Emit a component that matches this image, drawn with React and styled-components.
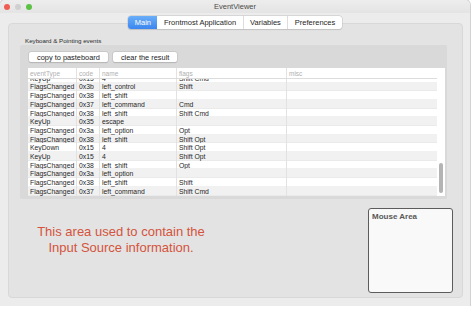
import React from "react";
import styled, { createGlobalStyle } from "styled-components";

const GlobalStyle = createGlobalStyle`
  html, body {
    margin: 0;
    padding: 0;
    background: #ffffff;
  }
  body {
    font-family: "Liberation Sans", Arial, sans-serif;
  }
`;

const rows = [
  ["KeyUp", "0x15", "4", "Shift Cmd"],
  ["FlagsChanged", "0x3b", "left_control", "Shift"],
  ["FlagsChanged", "0x38", "left_shift", ""],
  ["FlagsChanged", "0x37", "left_command", "Cmd"],
  ["FlagsChanged", "0x38", "left_shift", "Shift Cmd"],
  ["KeyUp", "0x35", "escape", ""],
  ["FlagsChanged", "0x3a", "left_option", "Opt"],
  ["FlagsChanged", "0x38", "left_shift", "Shift Opt"],
  ["KeyDown", "0x15", "4", "Shift Opt"],
  ["KeyUp", "0x15", "4", "Shift Opt"],
  ["FlagsChanged", "0x38", "left_shift", "Opt"],
  ["FlagsChanged", "0x3a", "left_option", ""],
  ["FlagsChanged", "0x38", "left_shift", "Shift"],
  ["FlagsChanged", "0x37", "left_command", "Shift Cmd"],
];

const tabs = ["Main", "Frontmost Application", "Variables", "Preferences"];

const App = () => {
  return (
    <>
      <GlobalStyle />
      <Window>
        <TitleBar>
          <Lights>
            <Light color="#ef5d53" />
            <Light color="#d0d0d0" />
            <Light color="#5cc245" />
          </Lights>
          <Title>EventViewer</Title>
          <span />
        </TitleBar>
        <Content>
          <Tabs>
            {tabs.map((t) => (
              <Tab key={t} active={t === "Main"}>
                {t}
              </Tab>
            ))}
          </Tabs>
          <Panel>
            <GroupLabel>Keyboard &amp; Pointing events</GroupLabel>
            <Group>
              <Buttons>
                <Button>copy to pasteboard</Button>
                <Button>clear the result</Button>
              </Buttons>
              <Table>
                <HeaderRow>
                  <Cell w={49}>eventType</Cell>
                  <Cell w={23}>code</Cell>
                  <Cell w={77}>name</Cell>
                  <Cell w={110}>flags</Cell>
                  <Cell grow>misc</Cell>
                </HeaderRow>
                <Body>
                  <RowList>
                    {rows.map((r, i) => (
                      <Row key={i}>
                        <Cell w={49}>{r[0]}</Cell>
                        <Cell w={23}>{r[1]}</Cell>
                        <Cell w={77}>{r[2]}</Cell>
                        <Cell w={110}>{r[3]}</Cell>
                        <Cell grow />
                      </Row>
                    ))}
                  </RowList>
                  <Scroller />
                </Body>
              </Table>
            </Group>
            <Bottom>
              <InfoText>
                This area used to contain the
                <br />
                Input Source information.
              </InfoText>
              <MouseArea>Mouse Area</MouseArea>
            </Bottom>
          </Panel>
        </Content>
      </Window>
    </>
  );
};

const Window = styled.div`
  width: 470px;
  height: 306px;
  background: #ececec;
  border-radius: 5px 5px 0 0;
  box-shadow: 0 0 0 1px #d2d2d2;
  display: flex;
  flex-direction: column;
  overflow: hidden;
`;

const TitleBar = styled.div`
  height: 13px;
  display: grid;
  grid-template-columns: 1fr auto 1fr;
  align-items: center;
  background: linear-gradient(#ededed, #e4e4e4);
`;

const Lights = styled.div`
  display: flex;
  gap: 5px;
  padding-left: 4px;
`;

const Light = styled.span`
  width: 6px;
  height: 6px;
  border-radius: 50%;
  background: ${(p) => p.color};
`;

const Title = styled.div`
  font-size: 7.5px;
  color: #4a4a4a;
`;

const Content = styled.div`
  flex: 1;
  display: flex;
  flex-direction: column;
  padding: 3px 7px 8px 8px;
`;

const Tabs = styled.div`
  align-self: center;
  display: flex;
  height: 13px;
  margin-left: -1px;
  margin-bottom: -6px;
  background: #ffffff;
  border-radius: 3px;
  box-shadow: 0 0 0 0.5px #c4c4c4, 0 0.5px 1px rgba(0, 0, 0, 0.15);
  position: relative;
  z-index: 1;
`;

const Tab = styled.div`
  display: flex;
  align-items: center;
  padding: 0 6.5px;
  font-size: 7.5px;
  color: ${(p) => (p.active ? "#ffffff" : "#262626")};
  background: ${(p) =>
    p.active ? "linear-gradient(#6aaef8, #3b86ef)" : "transparent"};
  border-radius: ${(p) => (p.active ? "3px 0 0 3px" : "0")};
  border-left: ${(p) => (p.active ? "none" : "1px solid #dddddd")};
  &:nth-child(2) {
    border-left: none;
  }
`;

const Panel = styled.div`
  flex: 1;
  display: flex;
  flex-direction: column;
  background: #e3e3e3;
  border: 1px solid #d8d8d8;
  border-radius: 4px;
  padding: 13px 9px 4px 11px;
`;

const GroupLabel = styled.div`
  font-size: 6.2px;
  line-height: 8px;
  color: #2a2a2a;
  margin-left: 5px;
`;

const Group = styled.div`
  margin-right: 6px;
  height: 154px;
  box-sizing: border-box;
  background: #d9d9d9;
  border-radius: 2px;
  padding: 7px 2px 3px 8px;
  display: flex;
  flex-direction: column;
`;

const Buttons = styled.div`
  display: flex;
  gap: 5px;
  padding-left: 1px;
  margin-bottom: 6px;
`;

const Button = styled.div`
  height: 10px;
  display: flex;
  align-items: center;
  padding: 0 8px;
  font-size: 7.4px;
  color: #222222;
  background: #ffffff;
  border-radius: 2px;
  box-shadow: 0 0 0 0.5px #bdbdbd, 0 0.5px 1px rgba(0, 0, 0, 0.2);
`;

const Table = styled.div`
  background: #ffffff;
  display: flex;
  flex-direction: column;
  flex: 1;
`;

const HeaderRow = styled.div`
  display: flex;
  height: 11px;
  align-items: center;
  font-size: 6.5px;
  color: #b0b0b0;
  border-bottom: 1px solid #dcdcdc;
  box-sizing: border-box;
  margin-right: 8px;
`;

const Cell = styled.div`
  box-sizing: border-box;
  width: ${(p) => (p.grow ? "auto" : `${p.w}px`)};
  flex: ${(p) => (p.grow ? 1 : "none")};
  height: 100%;
  display: flex;
  align-items: center;
  padding-left: 2px;
  white-space: nowrap;
  overflow: hidden;
  border-right: ${(p) => (p.grow ? "none" : "1px solid #e2e2e2")};
`;

const Body = styled.div`
  position: relative;
  height: 117px;
  overflow: hidden;
`;

const RowList = styled.div`
  margin-top: -5.1px;
  margin-right: 8px;
`;

const Row = styled.div`
  display: flex;
  height: 8.7px;
  font-size: 6.8px;
  color: #1f1f1f;
  background: #ffffff;
  box-shadow: inset 0 -0.5px 0 #e4e4e4;
  &:nth-child(even) {
    background: #f1f1f1;
  }
`;

const Scroller = styled.div`
  position: absolute;
  right: 2px;
  top: 84px;
  width: 4px;
  height: 30px;
  border-radius: 2px;
  background: #b4b4b4;
`;

const Bottom = styled.div`
  flex: 1;
  display: flex;
  align-items: flex-start;
  margin-top: 9px;
`;

const InfoText = styled.div`
  width: 202px;
  margin-top: 16px;
  text-align: center;
  font-size: 13px;
  line-height: 16px;
  color: #d4533c;
`;

const MouseArea = styled.div`
  margin-left: auto;
  width: 85px;
  height: 85px;
  box-sizing: border-box;
  border: 1px solid #5c5c5c;
  border-radius: 3px;
  background: #f9f9f9;
  padding: 3px 3px;
  font-size: 8px;
  font-weight: bold;
  color: #585858;
`;

export default App;
